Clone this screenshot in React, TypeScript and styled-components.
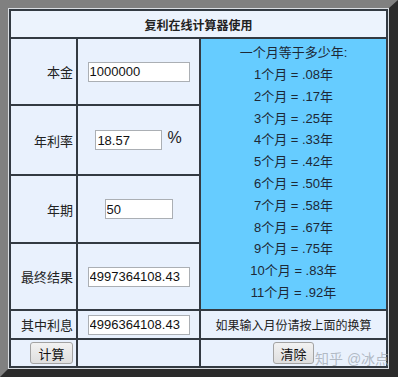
import React from "react";
import styled, { createGlobalStyle } from "styled-components";

const Global = createGlobalStyle`
  html, body { margin: 0; padding: 0; background: #ffffff; }
  body { font-family: "Liberation Sans", "Noto Sans CJK SC", sans-serif; }
`;

const FONT = `"Liberation Sans", "Noto Sans CJK SC", sans-serif`;

const Frame = styled.div`
  position: relative;
  width: 398px;
  height: 377px;
  box-sizing: border-box;
  border-style: solid;
  border-width: 8px 9px 8px 8px;
  border-color: #808080 #2b2b2b #2b2b2b #808080;
  padding: 1px;
  background: #d9dde2;
`;

const Grid = styled.div`
  display: grid;
  grid-template-columns: 67px 123px 187px;
  grid-template-rows: 28px 67px 70px 68px 67px 29px 28px;
  width: 379px;
  height: 359px;
  box-sizing: border-box;
  border: 1px solid #333a42;
  background: #e9f1fd;
  font-family: ${FONT};
  color: #222;
`;

const Cell = styled.div<{ $align?: "start" | "center" | "end"; $span?: number }>`
  box-sizing: border-box;
  border: 1px solid #333a42;
  display: flex;
  align-items: center;
  justify-content: ${(p) =>
    p.$align === "end" ? "flex-end" : p.$align === "start" ? "flex-start" : "center"};
  padding: 0 3px;
  font-size: 13px;
  background: #e9f1fd;
  ${(p) => (p.$span ? `grid-column: span ${p.$span};` : "")}
`;

const TitleCell = styled(Cell)`
  grid-column: 1 / span 3;
  font-size: 12px;
  font-weight: bold;
  background: #ecf3fd;
`;

const InfoCell = styled.div`
  grid-column: 3;
  grid-row: 2 / span 4;
  box-sizing: border-box;
  border: 1px solid #333a42;
  background: #66ccff;
  display: flex;
  flex-direction: column;
  align-items: center;
  justify-content: center;
  font-size: 13px;
  line-height: 21.8px;
  color: #1d2836;
  padding-bottom: 2px;
`;

const Note = styled(Cell)`
  font-size: 12px;
`;

const Input = styled.input<{ $w: number }>`
  width: ${(p) => p.$w}px;
  height: 20px;
  box-sizing: border-box;
  border: 1px solid #abafb4;
  background: #ffffff;
  padding: 0 1px;
  margin: 0;
  font-family: ${FONT};
  font-size: 13px;
  color: #111;
  outline: none;
`;

const Percent = styled.span`
  margin-left: 5px;
  font-size: 16px;
  line-height: 1;
  color: #222;
  position: relative;
  top: -2px;
`;

const Button = styled.button<{ $w: number }>`
  width: ${(p) => p.$w}px;
  height: 22px;
  box-sizing: border-box;
  border: 1px solid #a3a3a3;
  border-radius: 3px;
  background: linear-gradient(#f2f2f2, #dedede);
  font-family: ${FONT};
  font-size: 13px;
  color: #111;
  padding: 0;
  margin: 0;
`;

const Watermark = styled.div`
  position: absolute;
  left: 307px;
  top: 340px;
  font-family: ${FONT};
  font-size: 14px;
  color: rgba(160, 168, 178, 0.75);
  white-space: nowrap;
  pointer-events: none;
`;

const months = [".08", ".17", ".25", ".33", ".42", ".50", ".58", ".67", ".75", ".83", ".92"];

export default function App() {
  return (
    <>
      <Global />
      <Frame>
        <Grid>
          <TitleCell>复利在线计算器使用</TitleCell>

          <Cell $align="end">本金</Cell>
          <Cell>
            <Input $w={102} defaultValue="1000000" />
          </Cell>
          <InfoCell>
            <div>一个月等于多少年:</div>
            {months.map((m, i) => (
              <div key={m}>
                {i + 1}个月 = {m}年
              </div>
            ))}
          </InfoCell>

          <Cell $align="end">年利率</Cell>
          <Cell>
            <Input $w={67} defaultValue="18.57" />
            <Percent>%</Percent>
          </Cell>

          <Cell $align="end">年期</Cell>
          <Cell>
            <Input $w={68} defaultValue="50" />
          </Cell>

          <Cell $align="end">最终结果</Cell>
          <Cell>
            <Input $w={102} defaultValue="4997364108.43" />
          </Cell>

          <Cell $align="end">其中利息</Cell>
          <Cell>
            <Input $w={102} defaultValue="4996364108.43" />
          </Cell>
          <Note>如果输入月份请按上面的换算</Note>

          <Cell $align="end">
            <Button $w={43}>计算</Button>
          </Cell>
          <Cell />
          <Cell>
            <Button $w={41}>清除</Button>
          </Cell>
        </Grid>
        <Watermark>知乎 @冰点</Watermark>
      </Frame>
    </>
  );
}
